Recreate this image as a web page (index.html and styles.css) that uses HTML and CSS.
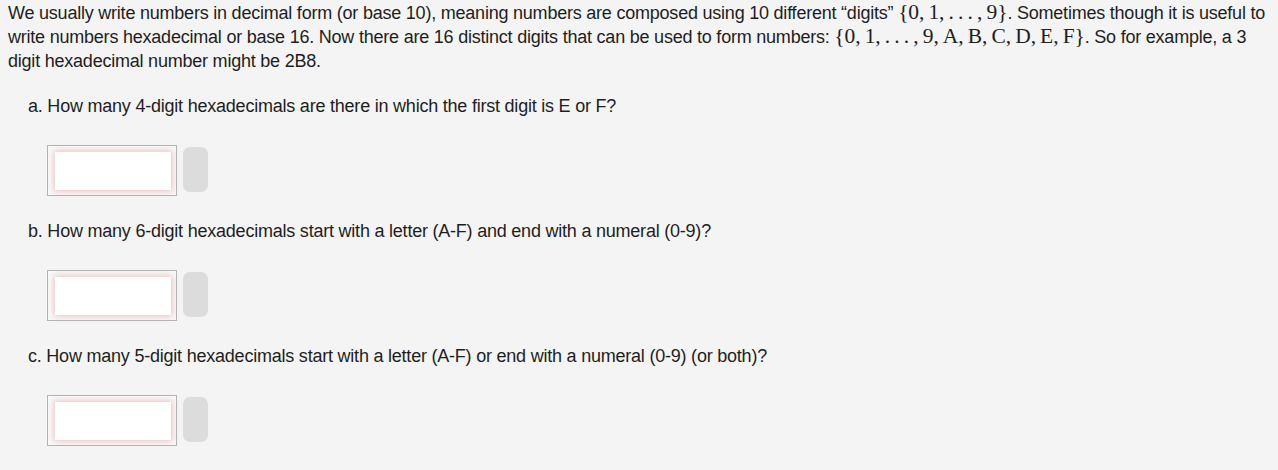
FILE: index.html
```html
<!DOCTYPE html>
<html>
<head>
<meta charset="utf-8">
<link rel="stylesheet" href="styles.css">
</head>
<body>
<p class="intro">We usually write numbers in decimal form (or base 10), meaning numbers are composed using 10 different “digits” <span class="math">{0,&#8201;1,&#8201;.&#8201;.&#8201;.&#8201;,&#8201;9}</span>. Sometimes though it is useful to write numbers hexadecimal or base 16. Now there are 16 distinct digits that can be used to form numbers: <span class="math">{0,&#8201;1,&#8201;.&#8201;.&#8201;.&#8201;,&#8201;9,&#8201;A,&#8201;B,&#8201;C,&#8201;D,&#8201;E,&#8201;F}</span>. So for example, a 3 digit hexadecimal number might be 2B8.</p>

<div class="question">
  <p class="prompt">a. How many 4-digit hexadecimals are there in which the first digit is E or F?</p>
  <div class="answer"><div class="field"><div class="input"></div></div><div class="btn"></div></div>
</div>
<div class="question">
  <p class="prompt">b. How many 6-digit hexadecimals start with a letter (A-F) and end with a numeral (0-9)?</p>
  <div class="answer"><div class="field"><div class="input"></div></div><div class="btn"></div></div>
</div>
<div class="question">
  <p class="prompt">c. How many 5-digit hexadecimals start with a letter (A-F) or end with a numeral (0-9) (or both)?</p>
  <div class="answer"><div class="field"><div class="input"></div></div><div class="btn"></div></div>
</div>
</body>
</html>
```
FILE: styles.css
```css
html, body {
  margin: 0;
  background: #f4f4f4;
}
body {
  padding: 1px 8px 0 8px;
  font-family: "Liberation Sans", Arial, sans-serif;
  font-size: 18px;
  letter-spacing: -0.22px;
  line-height: 24px;
  color: #1e1e1e;
}
.intro {
  margin: 0;
}
.math {
  font-family: "Liberation Serif", "Times New Roman", serif;
  font-size: 21.5px;
  letter-spacing: -0.1px;
  line-height: 1;
}
.question {
  padding-left: 20px;
  margin-top: 21px;
}
.question + .question {
  margin-top: 23px;
}
.prompt {
  margin: 0;
}
.answer {
  display: flex;
  align-items: flex-start;
  gap: 6px;
  margin-top: 27px;
  margin-left: 19px;
}
.field {
  box-sizing: border-box;
  width: 130px;
  height: 51px;
  border: 1px solid #b4b4b4;
  background: #f8f8f8;
  padding: 6px 5px 5px 7px;
}
.input {
  width: 116px;
  height: 38px;
  background: #fff;
  box-shadow: 0 0 6px 1px rgba(225, 120, 120, 0.45);
}
.btn {
  width: 25px;
  height: 45px;
  margin-top: 2px;
  border-radius: 7px;
  background: #dcdcdc;
}
```
